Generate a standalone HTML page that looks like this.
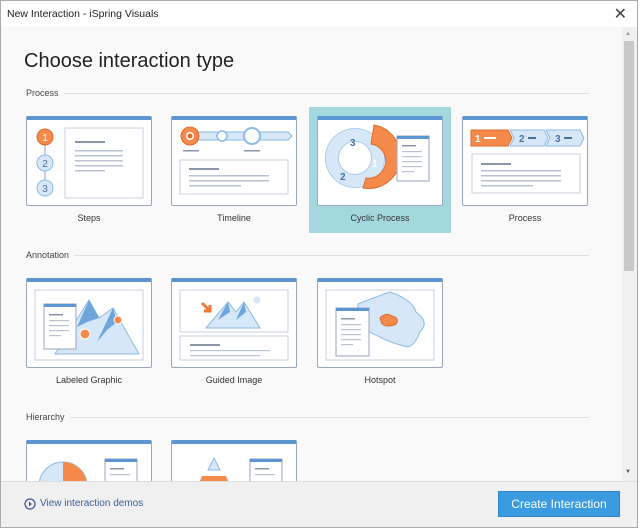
<!DOCTYPE html>
<html><head><meta charset="utf-8"><style>
*{margin:0;padding:0;box-sizing:border-box}
body{width:640px;height:529px;overflow:hidden;background:#fff;font-family:"Liberation Sans",sans-serif;position:relative}
.win{position:absolute;left:0;top:0;width:638px;height:528px;border:1px solid #aaa;background:#f9f9f9;overflow:hidden}
.title{position:absolute;left:0;top:0;width:100%;height:26px;background:#fff;font-size:10.5px;color:#222;padding:7px 0 0 6px}
.x{position:absolute;right:10px;top:3px;font-size:16px;color:#444}
.abs{position:absolute}
h1{position:absolute;left:23px;top:49px;font-size:20px;font-weight:normal;color:#222}
.sec{position:absolute;left:25px;width:563px;font-size:9px;color:#444;display:flex;align-items:center}
.sec::after{content:"";flex:1;height:1px;background:#dfe0e6;margin-left:5px}
.card{position:absolute;width:126px;height:90px;background:#fff;border:1px solid #9aa6bb;border-top:4px solid #5b96d3;border-radius:2px}
.lbl{position:absolute;width:126px;text-align:center;font-size:9px;color:#333}
.sel{position:absolute;left:308px;top:106px;width:142px;height:126px;background:#a3d8de}
.foot{position:absolute;left:0;top:480px;width:100%;height:48px;background:#f0f0f0;border-top:1px solid #ddd}
.btn{position:absolute;left:497px;top:490px;width:122px;height:26px;background:#3a9be0;border:1px solid #2c86c9;color:#fff;font-size:12px;text-align:center;line-height:24px}
.demo{position:absolute;left:39px;top:497px;font-size:10px;color:#3d5f9a}
.sb{position:absolute;left:621px;top:26px;width:15px;height:454px;background:#f0f0f0}
.th{position:absolute;left:623px;top:40px;width:10px;height:230px;background:#c8c8c8}
</style></head><body><div class="win">
<div class="title">New Interaction - iSpring Visuals<span class="x">✕</span></div>
<div class="sb"></div><div class="th"></div>
<div class="abs" style="left:624px;top:30px;font-size:6px;color:#999">▲</div>
<div class="abs" style="left:624px;top:468px;font-size:6px;color:#555">▼</div>
<h1>Choose interaction type</h1>
<div class="sec" style="top:87px">Process</div>
<div class="sec" style="top:249px">Annotation</div>
<div class="sec" style="top:411px">Hierarchy</div>
<div class="sel"></div>

<div class="card" style="left:25px;top:115px"><svg width="124" height="86">
<line x1="18" y1="17" x2="18" y2="68" stroke="#8ab" stroke-width="1"/>
<circle cx="18" cy="17" r="8" fill="#f58a4b" stroke="#e06a2a"/><text x="18" y="21" font-size="10" fill="#fff" text-anchor="middle" font-family="Liberation Sans">1</text>
<circle cx="18" cy="43" r="8" fill="#d6e8f8" stroke="#8bbbe6"/><text x="18" y="47" font-size="10" fill="#4a6fa0" text-anchor="middle" font-family="Liberation Sans">2</text>
<circle cx="18" cy="68" r="8" fill="#d6e8f8" stroke="#8bbbe6"/><text x="18" y="72" font-size="10" fill="#4a6fa0" text-anchor="middle" font-family="Liberation Sans">3</text>
<rect x="38" y="8" width="78" height="70" fill="#fff" stroke="#c9d0dc"/>
<rect x="48" y="21" width="30" height="2" fill="#8a96a8"/>
<g fill="#b8c2d0"><rect x="48" y="30" width="48" height="1.5"/><rect x="48" y="35" width="48" height="1.5"/><rect x="48" y="40" width="48" height="1.5"/><rect x="48" y="45" width="48" height="1.5"/><rect x="48" y="50" width="30" height="1.5"/></g></svg></div>
<div class="lbl" style="left:25px;top:212px">Steps</div>

<div class="card" style="left:170px;top:115px"><svg width="124" height="86">
<path d="M18 12H116L120 16L116 20H18Z" fill="#d6e8f8" stroke="#8bbbe6"/>
<circle cx="18" cy="16" r="9" fill="#f58a4b" stroke="#e06a2a"/><circle cx="18" cy="16" r="4" fill="#fff"/><circle cx="18" cy="16" r="2.5" fill="#e06a2a"/>
<circle cx="50" cy="16" r="5" fill="#fff" stroke="#8bbbe6" stroke-width="1.5"/>
<circle cx="80" cy="16" r="8" fill="#fff" stroke="#8bbbe6" stroke-width="2"/>
<rect x="11" y="30" width="16" height="1.5" fill="#8a96a8"/><rect x="72" y="30" width="16" height="1.5" fill="#8a96a8"/>
<rect x="8" y="40" width="108" height="34" fill="#fff" stroke="#c9d0dc"/>
<rect x="17" y="48" width="30" height="2" fill="#8a96a8"/>
<g fill="#b8c2d0"><rect x="17" y="55" width="80" height="1.5"/><rect x="17" y="60" width="80" height="1.5"/><rect x="17" y="65" width="52" height="1.5"/></g></svg></div>
<div class="lbl" style="left:170px;top:212px">Timeline</div>

<div class="card" style="left:316px;top:115px"><svg width="124" height="86">
<circle cx="37" cy="38" r="23" fill="none" stroke="#d6e8f8" stroke-width="13"/>
<circle cx="37" cy="38" r="29.5" fill="none" stroke="#9cc4ea" stroke-width="0.8"/>
<circle cx="37" cy="38" r="16.5" fill="none" stroke="#9cc4ea" stroke-width="0.8"/>
<path d="M56 5A31 31 0 0 1 45 68L48 58A16 16 0 0 0 53 24Z" fill="#f58a4b" stroke="#e06a2a"/>
<text x="54" y="47" font-size="10" fill="#fff" font-weight="bold" font-family="Liberation Sans">1</text>
<text x="32" y="26" font-size="10" fill="#4a6fa0" font-weight="bold" font-family="Liberation Sans">3</text>
<text x="22" y="60" font-size="10" fill="#4a6fa0" font-weight="bold" font-family="Liberation Sans">2</text>
<rect x="79" y="16" width="32" height="45" fill="#fff" stroke="#9aa6bb"/><rect x="79" y="16" width="32" height="3" fill="#5b96d3"/>
<rect x="84" y="25" width="14" height="1.5" fill="#8a96a8"/>
<g fill="#b8c2d0"><rect x="84" y="31" width="20" height="1.2"/><rect x="84" y="36" width="20" height="1.2"/><rect x="84" y="41" width="20" height="1.2"/><rect x="84" y="46" width="20" height="1.2"/><rect x="84" y="51" width="12" height="1.2"/></g></svg></div>
<div class="lbl" style="left:316px;top:212px">Cyclic Process</div>

<div class="card" style="left:461px;top:115px"><svg width="124" height="86">
<path d="M8 10H45L49 18L45 26H8Z" fill="#f58a4b" stroke="#e06a2a"/>
<path d="M47 10H81L85 18L81 26H47L51 18Z" fill="#d6e8f8" stroke="#8bbbe6"/>
<path d="M83 10H117L121 18L117 26H83L87 18Z" fill="#d6e8f8" stroke="#8bbbe6"/>
<text x="12" y="22" font-size="10" fill="#fff" font-weight="bold" font-family="Liberation Sans">1</text><rect x="21" y="17" width="12" height="2" fill="#fff"/>
<text x="56" y="22" font-size="10" fill="#4a6fa0" font-weight="bold" font-family="Liberation Sans">2</text><rect x="65" y="17" width="8" height="2" fill="#4a6fa0"/>
<text x="92" y="22" font-size="10" fill="#4a6fa0" font-weight="bold" font-family="Liberation Sans">3</text><rect x="101" y="17" width="8" height="2" fill="#4a6fa0"/>
<rect x="9" y="34" width="108" height="39" fill="#fff" stroke="#c9d0dc"/>
<rect x="18" y="43" width="30" height="2" fill="#8a96a8"/>
<g fill="#b8c2d0"><rect x="18" y="50" width="80" height="1.5"/><rect x="18" y="55" width="80" height="1.5"/><rect x="18" y="60" width="80" height="1.5"/><rect x="18" y="65" width="52" height="1.5"/></g></svg></div>
<div class="lbl" style="left:461px;top:212px">Process</div>

<div class="card" style="left:25px;top:277px"><svg width="124" height="86">
<rect x="8" y="8" width="108" height="70" fill="#fff" stroke="#c9d0dc"/>
<path d="M28 72L62 18L72 36L86 26L112 72Z" fill="#d6e8f8" stroke="#8bbbe6"/>
<path d="M62 18L50 45L60 40L72 36Z M86 26L70 60L80 48L90 40Z" fill="#6ea6dc"/>
<rect x="17" y="22" width="32" height="45" fill="#fff" stroke="#9aa6bb"/><rect x="17" y="22" width="32" height="3" fill="#5b96d3"/>
<rect x="22" y="32" width="14" height="1.5" fill="#8a96a8"/>
<g fill="#b8c2d0"><rect x="22" y="38" width="20" height="1.2"/><rect x="22" y="43" width="20" height="1.2"/><rect x="22" y="48" width="20" height="1.2"/><rect x="22" y="53" width="12" height="1.2"/></g>
<circle cx="58" cy="52" r="5" fill="#f58a4b" stroke="#fff"/><circle cx="91" cy="38" r="4" fill="#f58a4b" stroke="#fff"/></svg></div>
<div class="lbl" style="left:25px;top:374px">Labeled Graphic</div>

<div class="card" style="left:170px;top:277px"><svg width="124" height="86">
<rect x="8" y="8" width="108" height="42" fill="#fff" stroke="#c9d0dc"/>
<rect x="8" y="54" width="108" height="24" fill="#fff" stroke="#c9d0dc"/>
<path d="M34 46L56 20L64 30L72 20L88 46Z" fill="#d6e8f8" stroke="#8bbbe6"/>
<path d="M56 20L46 38L58 30Z M72 20L64 38L74 30Z" fill="#6ea6dc"/>
<circle cx="85" cy="18" r="3.5" fill="#d6e8f8"/>
<path d="M30 21L38 29M38 23V29H32" stroke="#f07a35" stroke-width="3" fill="none"/>
<rect x="18" y="62" width="30" height="2" fill="#8a96a8"/><g fill="#b8c2d0"><rect x="18" y="68" width="80" height="1.2"/><rect x="18" y="73" width="70" height="1.2"/></g></svg></div>
<div class="lbl" style="left:170px;top:374px">Guided Image</div>

<div class="card" style="left:316px;top:277px"><svg width="124" height="86">
<rect x="8" y="8" width="108" height="70" fill="#fff" stroke="#c9d0dc"/>
<path d="M40 22Q60 14 72 10Q95 18 98 30Q112 40 102 50Q95 68 86 64Q70 60 60 54Q38 46 40 22Z" fill="#d6e8f8" stroke="#8bbbe6"/>
<path d="M62 36Q68 30 74 34Q82 36 78 42Q70 46 64 42Z" fill="#f58a4b" stroke="#e06a2a"/>
<rect x="18" y="26" width="33" height="48" fill="#fff" stroke="#9aa6bb"/><rect x="18" y="26" width="33" height="3" fill="#5b96d3"/>
<rect x="23" y="36" width="14" height="1.5" fill="#8a96a8"/>
<g fill="#b8c2d0"><rect x="23" y="42" width="20" height="1.2"/><rect x="23" y="47" width="20" height="1.2"/><rect x="23" y="52" width="20" height="1.2"/><rect x="23" y="57" width="20" height="1.2"/><rect x="23" y="62" width="12" height="1.2"/></g></svg></div>
<div class="lbl" style="left:316px;top:374px">Hotspot</div>

<div class="card" style="left:25px;top:439px;height:60px"><svg width="124" height="50">
<circle cx="36" cy="42" r="24" fill="#d6e8f8" stroke="#8bbbe6"/><path d="M36 18A24 24 0 0 1 60 42H36Z" fill="#f58a4b"/>
<rect x="78" y="15" width="32" height="40" fill="#fff" stroke="#9aa6bb"/><rect x="78" y="15" width="32" height="3" fill="#5b96d3"/>
<rect x="83" y="24" width="14" height="1.5" fill="#8a96a8"/><rect x="83" y="30" width="20" height="1.2" fill="#b8c2d0"/></svg></div>
<div class="card" style="left:170px;top:439px;height:60px"><svg width="124" height="50">
<path d="M42 14L36 26H48Z" fill="#d6e8f8" stroke="#8bbbe6"/><path d="M30 32H54L58 42H26Z" fill="#f58a4b"/>
<rect x="78" y="15" width="32" height="40" fill="#fff" stroke="#9aa6bb"/><rect x="78" y="15" width="32" height="3" fill="#5b96d3"/>
<rect x="83" y="24" width="14" height="1.5" fill="#8a96a8"/><rect x="83" y="30" width="20" height="1.2" fill="#b8c2d0"/></svg></div>

<div class="foot"></div>
<svg class="abs" style="left:23px;top:497px" width="12" height="12"><circle cx="6" cy="6" r="5" fill="none" stroke="#3d5f9a" stroke-width="1.3"/><path d="M5 3.5L8 6L5 8.5Z" fill="#3d5f9a"/></svg>
<div class="demo">View interaction demos</div>
<div class="btn">Create Interaction</div>
</div></body></html>
